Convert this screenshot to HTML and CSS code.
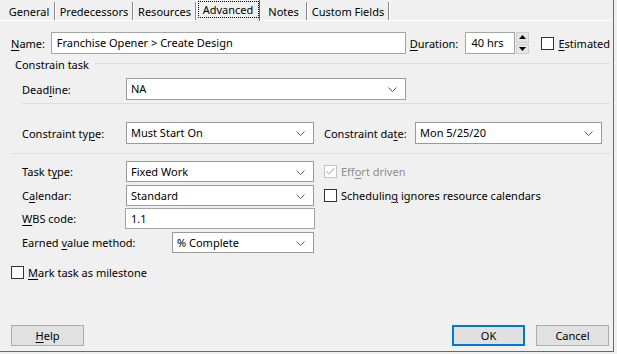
FILE: index.html
```html
<!DOCTYPE html>
<html>
<head>
    <title>Task Information</title>
    <link rel="stylesheet" href="styles.css">
</head>
<body>
    <div class="window">
        <div class="tabs">
            <div class="tab tab-general">General</div>
            <div class="tab tab-pred">Predecessors</div>
            <div class="tab tab-res">Resources</div>
            <div class="tab tab-adv active"><span class="focus">Advanced</span></div>
            <div class="tab tab-notes">Notes</div>
            <div class="tab tab-custom">Custom Fields</div>
        </div>

        <div class="panel">
            <div class="row name-row">
                <label class="lbl-name"><u>N</u>ame:</label>
                <div class="field tall w-name">Franchise Opener &gt; Create Design</div>
                <label class="lbl-dur"><u>D</u>uration:</label>
                <div class="field tall w-dur">40 hrs</div>
                <div class="spinner">
                    <div class="spin-btn"><svg width="7" height="4" viewBox="0 0 7 4"><polygon points="3.5,0 7,4 0,4" fill="#000"/></svg></div>
                    <div class="spin-btn"><svg width="7" height="4" viewBox="0 0 7 4"><polygon points="0,0 7,0 3.5,4" fill="#000"/></svg></div>
                </div>
                <span class="check est-check"></span>
                <label><u>E</u>stimated</label>
            </div>

            <div class="group-head">
                <span>Constrain task</span>
                <div class="group-line"></div>
            </div>

            <div class="row deadline-row">
                <label class="lbl-col">Dead<u>l</u>ine:</label>
                <div class="field tall select w-deadline">NA
                    <svg class="chev" width="9" height="5" viewBox="0 0 9 5"><polyline points="0.5,0.5 4.5,4.5 8.5,0.5" fill="none" stroke="#5a5a5a"/></svg>
                </div>
            </div>
            <div class="sep sep-inner"></div>

            <div class="row constraint-row">
                <label class="lbl-col">Constraint ty<u>p</u>e:</label>
                <div class="field tall select w-mid">Must Start On
                    <svg class="chev" width="9" height="5" viewBox="0 0 9 5"><polyline points="0.5,0.5 4.5,4.5 8.5,0.5" fill="none" stroke="#5a5a5a"/></svg>
                </div>
                <label class="lbl-cdate">Constraint da<u>t</u>e:</label>
                <div class="field tall select w-date">Mon 5/25/20
                    <svg class="chev" width="9" height="5" viewBox="0 0 9 5"><polyline points="0.5,0.5 4.5,4.5 8.5,0.5" fill="none" stroke="#5a5a5a"/></svg>
                </div>
            </div>
            <div class="sep sep-outer"></div>

            <div class="row tasktype-row">
                <label class="lbl-col">Task t<u>y</u>pe:</label>
                <div class="field select w-mid">Fixed Work
                    <svg class="chev" width="9" height="5" viewBox="0 0 9 5"><polyline points="0.5,0.5 4.5,4.5 8.5,0.5" fill="none" stroke="#5a5a5a"/></svg>
                </div>
                <span class="check disabled side-check">
                    <svg width="11" height="11" viewBox="0 0 11 11"><polyline points="1.5,5.5 4,8 9.5,2" fill="none" stroke="#c4c4c4" stroke-width="1.2"/></svg>
                </span>
                <label class="muted">Eff<u>o</u>rt driven</label>
            </div>

            <div class="row calendar-row">
                <label class="lbl-col">C<u>a</u>lendar:</label>
                <div class="field select w-mid">Standard
                    <svg class="chev" width="9" height="5" viewBox="0 0 9 5"><polyline points="0.5,0.5 4.5,4.5 8.5,0.5" fill="none" stroke="#5a5a5a"/></svg>
                </div>
                <span class="check side-check"></span>
                <label>Schedulin<u>g</u> ignores resource calendars</label>
            </div>

            <div class="row wbs-row">
                <label class="lbl-wbs"><u>W</u>BS code:</label>
                <div class="field w-wbs">1.1</div>
            </div>

            <div class="row evm-row">
                <label class="lbl-evm">Earned <u>v</u>alue method:</label>
                <div class="field select w-evm">% Complete
                    <svg class="chev" width="9" height="5" viewBox="0 0 9 5"><polyline points="0.5,0.5 4.5,4.5 8.5,0.5" fill="none" stroke="#5a5a5a"/></svg>
                </div>
            </div>

            <div class="row milestone-row">
                <span class="check"></span>
                <label><u>M</u>ark task as milestone</label>
            </div>

            <div class="buttons">
                <button class="btn"><u>H</u>elp</button>
                <div class="spacer"></div>
                <button class="btn default">OK</button>
                <button class="btn">Cancel</button>
            </div>
        </div>
    </div>
</body>
</html>
```

FILE: styles.css
```css
body {
    margin: 0;
    background: #f0f0f0;
    font-family: "Noto Sans", sans-serif;
    font-size: 11px;
    color: #000;
    width: 617px;
    height: 354px;
    overflow: hidden;
}
label {
    white-space: nowrap;
}
u {
    text-decoration-thickness: 1px;
    text-underline-offset: 2px;
}
.window {
    width: 614px;
    height: 352px;
    box-sizing: border-box;
    border-right: 1px solid #696969;
    border-bottom: 1px solid #696969;
}

/* tabs */
.tabs {
    display: flex;
    height: 20px;
    padding-left: 4px;
    border-bottom: 1px solid #fff;
    box-sizing: content-box;
}
.tab {
    margin-top: 2px;
    height: 18px;
    line-height: 19px;
    text-align: center;
    border-right: 1px solid #8a8a8a;
    box-shadow: 1px 0 0 #fff;
    box-sizing: border-box;
    white-space: nowrap;
}
.tab-general { width: 51px; }
.tab-pred { width: 77px; margin-left: 1px; }
.tab-res { width: 62px; margin-left: 1px; }
.tab-adv { width: 64px; }
.tab-notes { width: 46px; margin-left: 1px; }
.tab-custom { width: 81px; margin-left: 1px; }
.tab.active {
    margin-top: 0;
    height: 21px;
    line-height: 15px;
    border-left: 1px solid #fff;
    border-right: 1px solid #696969;
    box-shadow: none;
    background: #f0f0f0;
    padding-top: 1px;
    position: relative;
    z-index: 1;
}
.focus {
    display: inline-block;
    width: 61px;
    height: 17px;
    box-sizing: border-box;
    border: 1px dotted #000;
}

/* panel */
.panel {
    padding: 11px 3px 0 11px;
    display: flex;
    flex-direction: column;
}
.row {
    display: flex;
    align-items: center;
}
.field {
    height: 21px;
    box-sizing: border-box;
    border: 1px solid #a5a5a5;
    background: #fff;
    padding-left: 5px;
    line-height: 19px;
    white-space: nowrap;
    position: relative;
    flex-shrink: 0;
}
.field.tall {
    height: 22px;
    line-height: 20px;
}
.select {
    padding-left: 4px;
    border-color: #9a9a9a;
}
.chev {
    position: absolute;
    right: 8px;
    top: 8px;
}

.lbl-name { width: 40px; }
.w-name { width: 355px; }
.lbl-dur { margin-left: 4px; width: 56px; }
.w-dur { width: 50px; }
.spinner {
    width: 13px;
    height: 22px;
    margin-left: 1px;
    display: flex;
    flex-direction: column;
    gap: 1px;
}
.spin-btn {
    flex: 1;
    background: #e6e6e6;
    border: 1px solid #cfcfcf;
    display: flex;
    align-items: center;
    justify-content: center;
}
.check {
    width: 13px;
    height: 13px;
    box-sizing: border-box;
    border: 1px solid #333;
    background: #fff;
    flex-shrink: 0;
    display: flex;
    align-items: center;
    justify-content: center;
}
.check.disabled {
    border-color: #c4c4c4;
}
.est-check { margin-left: 12px; margin-right: 4px; }

.group-head {
    display: flex;
    align-items: center;
    height: 14px;
    margin-top: 3px;
    padding-left: 4px;
}
.group-line {
    flex: 1;
    height: 0;
    border-top: 1px solid #dcdcdc;
    margin-left: 6px;
    margin-top: -1px;
}

.lbl-col { width: 104px; padding-left: 11px; }
.deadline-row { margin-top: 7px; }
.w-deadline { width: 280px; }
.sep {
    height: 0;
    border-top: 1px solid #dcdcdc;
}
.sep-inner { margin: 3px 0 0 11px; }
.constraint-row { margin-top: 18px; }
.w-mid { width: 188px; }
.lbl-cdate { width: 91px; margin-left: 10px; }
.w-date { width: 187px; }
.sep-outer { margin: 9px 0 0 0; }

.tasktype-row { margin-top: 7px; }
.calendar-row { margin-top: 3px; }
.wbs-row { margin-top: 2px; }
.evm-row { margin-top: 3px; }
.side-check { margin-left: 10px; margin-right: 4px; }
.muted { color: #8d8d8d; }
.lbl-wbs { width: 103px; padding-left: 11px; }
.w-wbs { width: 190px; }
.lbl-evm { width: 150px; padding-left: 11px; }
.w-evm { width: 142px; }

.milestone-row { margin-top: 13px; height: 13px; }
.milestone-row .check { margin-right: 4px; }

.buttons {
    display: flex;
    margin-top: 46px;
    padding-right: 1px;
}
.spacer { flex: 1; }
.btn {
    font-family: inherit;
    font-size: 11px;
    color: #000;
    width: 73px;
    height: 21px;
    background: #e1e1e1;
    border: 1px solid #adadad;
    border-radius: 0;
    padding: 0;
    line-height: 17px;
}
.btn.default {
    border: 2px solid #0078d7;
    margin-right: 11px;
}
```
